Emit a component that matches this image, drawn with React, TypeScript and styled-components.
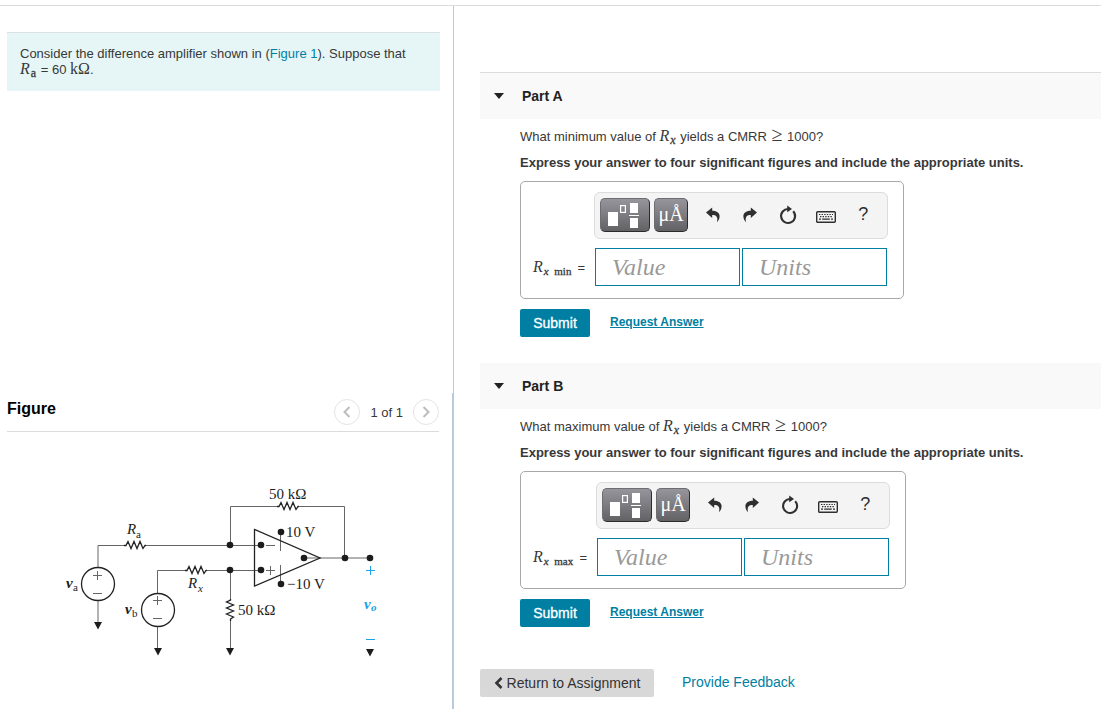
import React, { useId } from 'react';
import styled, { createGlobalStyle } from 'styled-components';

const SANS = '"Liberation Sans", Arial, sans-serif';
const SERIF = '"Liberation Serif", "Times New Roman", serif';
const TEAL = '#007fa3';

const GlobalStyle = createGlobalStyle`
  *, *::before, *::after { box-sizing: border-box; }
  body {
    margin: 0;
    background: #fff;
    color: #383838;
    font-family: ${SANS};
    font-size: 13px;
  }
`;

const Page = styled.div`
  display: flex;
  flex-direction: column;
  min-height: 100vh;
  padding-top: 5px;
`;

const Columns = styled.div`
  flex: 1;
  display: grid;
  grid-template-columns: clamp(320px, 42vw, 454px) minmax(0, 1fr);
  border-top: 1px solid #dcdcdc;
`;

const Side = styled.aside`
  display: flex;
  flex-direction: column;
`;

const ProblemPane = styled.section`
  flex: 1;
  padding: 26px 13px 20px 7px;
  border-right: 1px solid #b9cadd;
`;

const Problem = styled.p`
  margin: 0;
  padding: 13px;
  border-top: 1px solid #dbe0e0;
  background: #e6f6f7;
  line-height: 16px;
`;

const Given = styled.span`
  white-space: nowrap;
`;

const TextLink = styled.a`
  color: ${TEAL};
  text-decoration: none;
`;

const MathText = styled.span<{ $upright?: boolean }>`
  font-family: ${SERIF};
  font-size: 16px;
  font-style: ${(p) => (p.$upright ? 'normal' : 'italic')};
  line-height: 1px;
`;

const MathSub = styled.sub<{ $upright?: boolean }>`
  margin: 0 1px;
  font-family: ${SERIF};
  font-size: 12px;
  font-style: ${(p) => (p.$upright ? 'normal' : 'italic')};
  -webkit-text-stroke: 0.3px currentColor;
  line-height: 1px;
  vertical-align: -3px;
`;

const Relation = styled(MathText)`
  margin: 0 1px;
  font-size: 20px;
`;

const FigurePane = styled.section`
  padding: 0 13px 39px 7px;
  border-right: 2px solid #b9cadd;
`;

const FigureHead = styled.header`
  display: flex;
  align-items: center;
  justify-content: space-between;
  height: 39px;
  border-bottom: 1px solid #dcdcdc;
`;

const FigureTitle = styled.h2`
  margin: 0;
  padding-bottom: 6px;
  color: #000;
  font-size: 16px;
  line-height: 18px;
`;

const Pager = styled.nav`
  display: flex;
  align-items: center;
  gap: 10px;
  font-size: 13px;
`;

const PageCount = styled.span`
  padding-top: 2px;
  line-height: 18px;
`;

const RoundButton = styled.button`
  display: flex;
  align-items: center;
  justify-content: center;
  width: 26px;
  height: 26px;
  padding: 0;
  border: 1px solid #e4e4e4;
  border-radius: 50%;
  background: #fff;
`;

const Circuit = styled.svg`
  display: block;
  width: 350px;
  max-width: 100%;
  margin: 48px 0 0 43px;
  font-family: ${SERIF};
`;

const Main = styled.main`
  padding: 66px 0 12px 26px;
`;

const PartHead = styled.header<{ $first?: boolean }>`
  display: flex;
  align-items: center;
  gap: 18px;
  padding: 0 14px;
  height: ${(p) => (p.$first ? 47 : 46)}px;
  border-top: ${(p) => (p.$first ? '1px solid #dcdcdc' : 'none')};
  background: #f9f9f9;
`;

const PartTitle = styled.h2`
  margin: 0;
  color: #222;
  font-size: 14px;
  line-height: 18px;
`;

const Collapse = styled.button`
  display: flex;
  width: 10px;
  padding: 0;
  border: 0;
  background: none;
`;

const PartBody = styled.div`
  padding: 5px 20px 26px 40px;
`;

const Line = styled.p<{ $strong?: boolean }>`
  margin: 0;
  font-weight: ${(p) => (p.$strong ? 'bold' : 'normal')};
  line-height: 26px;
`;

const AnswerBox = styled.form<{ $labelWidth: number }>`
  display: grid;
  grid-template-columns: ${(p) => p.$labelWidth}px 294px;
  row-gap: 9px;
  width: fit-content;
  margin: 5px 0 10px;
  padding: 10px 15px 12px 12px;
  border: 1px solid #a8a8a8;
  border-radius: 5px;
`;

const Toolbar = styled.div`
  grid-column: 2;
  display: flex;
  align-items: center;
  height: 47px;
  padding: 0 5px 2px;
  border: 1px solid #dcdcdc;
  border-radius: 6px;
  background: #f4f4f4;
`;

const DarkButton = styled.button<{ $width: number }>`
  display: flex;
  align-items: center;
  justify-content: center;
  width: ${(p) => p.$width}px;
  height: 34px;
  padding: 0;
  border: 1px solid #2b2b2b;
  border-top-color: #6d6d72;
  border-left-color: #6d6d72;
  border-radius: 5px;
  background: linear-gradient(#96959c, #626265);
  color: #fff;
  font-family: ${SERIF};
  font-size: 20px;
`;

const DarkGroup = styled.div`
  display: flex;
  gap: 4px;
  margin-right: 6px;
`;

const ToolButton = styled.button`
  display: flex;
  align-items: center;
  justify-content: center;
  width: 38px;
  height: 34px;
  padding: 0;
  border: 0;
  background: none;
  color: #2f2f2f;
  font-family: ${SANS};
  font-size: 18px;
`;

const FieldLabel = styled.label`
  display: flex;
  align-items: center;
  justify-content: space-between;
  padding-right: 9px;
  white-space: nowrap;
`;

const LabelSub = styled(MathSub)`
  font-size: 11px;
`;

const Fields = styled.div`
  display: grid;
  grid-template-columns: 1fr 1fr;
  gap: 2px;
  padding: 0 1px;
`;

const Field = styled.input`
  width: 100%;
  height: 38px;
  padding: 0 16px;
  border: 1px solid ${TEAL};
  border-radius: 0;
  background: #fff;
  color: #222;
  font-family: ${SERIF};
  font-size: 24px;
  font-style: italic;
  &::placeholder { color: #999; opacity: 1; }
`;

const Actions = styled.div`
  display: flex;
  align-items: center;
  gap: 20px;
`;

const Submit = styled.button`
  width: 70px;
  height: 28px;
  padding: 0;
  border: 0;
  border-radius: 2px;
  background: ${TEAL};
  color: #fff;
  font-family: ${SANS};
  font-size: 14px;
  -webkit-text-stroke: 0.3px #fff;
`;

const RequestLink = styled.a`
  padding-bottom: 2px;
  color: ${TEAL};
  font-size: 12px;
  font-weight: bold;
`;

const Footer = styled.footer`
  display: flex;
  align-items: center;
  gap: 28px;
  padding-top: 16px;
  font-size: 14px;
`;

const ReturnButton = styled.button`
  display: flex;
  align-items: center;
  justify-content: center;
  gap: 4px;
  width: 174px;
  height: 28px;
  padding: 0;
  border: 0;
  border-radius: 2px;
  background: #d8d8d8;
  color: #333;
  font-family: ${SANS};
  font-size: 14px;
`;

const FeedbackLink = styled(TextLink)`
  padding-bottom: 2px;
`;

function Chevron({ flip }: { flip?: boolean }) {
  return (
    <svg width="8" height="12" viewBox="0 0 8 12" fill="none" stroke="#bdbdbd" strokeWidth="2">
      <path d={flip ? 'M1.5 1l5 5-5 5' : 'M6.5 1l-5 5 5 5'} />
    </svg>
  );
}

function TemplateIcon() {
  return (
    <svg width="34" height="26" viewBox="0 0 34 26" fill="#fff">
      <rect x="0" y="10" width="10" height="14" />
      <rect x="12.6" y="3.6" width="4.8" height="6.8" fill="none" stroke="#fff" strokeWidth="1.2" />
      <rect x="22" y="1" width="8" height="10" />
      <rect x="21" y="13" width="10" height="1" />
      <rect x="22" y="16" width="8" height="10" />
    </svg>
  );
}

function BentArrow({ flip }: { flip?: boolean }) {
  return (
    <svg width="14" height="16" viewBox="0 0 14 16" fill="#2f2f2f">
      <path
        transform={flip ? 'translate(14 0) scale(-1 1)' : undefined}
        d="M0 5.6L6.2.6V3.7C11.2 3.7 13.8 6.3 13.6 9.6C13.5 12 12.5 13.8 10.9 15.2C11.5 12.8 11.6 10.9 10.5 9.5C9.6 8.3 8.2 8 6.2 8V11Z"
      />
    </svg>
  );
}

function ResetIcon() {
  return (
    <svg width="18" height="20" viewBox="0 0 18 20" fill="none">
      <path d="M14.2 6.2A7 7 0 1 1 9.4 4" stroke="#2f2f2f" strokeWidth="2.1" />
      <path d="M8.2.4L13 4L8.2 7.2Z" fill="#2f2f2f" />
    </svg>
  );
}

function KeyboardIcon() {
  return (
    <svg width="20" height="16" viewBox="0 0 20 16" fill="none" stroke="#2f2f2f">
      <rect x=".7" y="4.7" width="18.6" height="10.6" rx="1" strokeWidth="1.4" />
      <path d="M3 7.5h14M4 9.6h13" strokeWidth="1.2" strokeDasharray="1.4 1.2" />
      <path d="M3 12.2h2M6.2 12.2h7.6M15 12.2h2" strokeWidth="1.3" />
    </svg>
  );
}

const H_RESISTOR = 'l2 0 l2 -4 l3 7 l3 -7 l3 7 l3 -7 l3 7 l2 -3 l1 0';
const DOTS = [
  [230, 545], [230, 570], [261, 545], [261, 570], [281, 532],
  [281, 584], [304, 558], [345, 558], [370, 558],
];
const GROUNDS = [[98, 622], [158, 648], [230, 648], [370, 649]];

function CircuitDiagram() {
  return (
    <Circuit viewBox="50 480 350 190" role="img" aria-label="Difference amplifier circuit">
      <g fill="none" stroke="#666" strokeWidth="1">
        <path d="M98 567V545.5H125M145 545.5H261M98 601V622" />
        <path d="M157.5 593V570.5H186M206 570.5H261M157.5 627V648" />
        <path d="M230.5 545V506.5H278M298 506.5H344.5V558M230.5 570V599M230.5 621V648" />
        <path d="M280.5 532V551M280.5 565V584M304 558H370" />
        <path d="M266 545.5h9M266 570.5h9M270.5 566v9" />
        <path d="M93 575.5h9M97.5 571v9M93 593.5h9M153 600.5h9M157.5 596v9M153 618.5h9" />
      </g>
      <g fill="none" stroke="#222" strokeWidth="1.3">
        <circle cx="98" cy="584" r="16.5" />
        <circle cx="158" cy="610" r="16.5" />
        <path d="M254.5 529.5V586L320 558Z" />
        <path d={`M124 545.5${H_RESISTOR}`} />
        <path d={`M185 570.5${H_RESISTOR}`} />
        <path d={`M277 506.5${H_RESISTOR}`} />
        <path d="M230.5 599v1l-4 2 7 3-7 3 7 3-7 3 7 3-3 2v2" />
      </g>
      <g fill="#1c1c1c">
        {DOTS.map(([x, y]) => (
          <circle key={`${x}-${y}`} cx={x} cy={y} r="3.3" />
        ))}
        {GROUNDS.map(([x, y]) => (
          <path key={`${x}-${y}`} d={`M${x - 4} ${y}h8l-4 7.5z`} />
        ))}
      </g>
      <g fill="#1c1c1c" fontSize="15">
        <text x="269" y="499">50 kΩ</text>
        <text x="238" y="615">50 kΩ</text>
        <text x="286" y="537">10 V</text>
        <text x="287" y="589">−10 V</text>
        <text x="127" y="534" fontStyle="italic">R</text>
        <text x="136" y="538" fontSize="11">a</text>
        <text x="188" y="588" fontStyle="italic">R</text>
        <text x="198" y="592" fontSize="11" fontStyle="italic">x</text>
        <text x="66" y="588" fontStyle="italic" fontWeight="bold">v</text>
        <text x="73" y="591" fontSize="11">a</text>
        <text x="125" y="614" fontStyle="italic" fontWeight="bold">v</text>
        <text x="132" y="617" fontSize="11">b</text>
      </g>
      <g fill="#1ba1e6">
        <path d="M366 570.5h9M370.5 566v9M366 639.5h9" stroke="#1ba1e6" />
        <text x="364" y="609" fontSize="15" fontStyle="italic" fontWeight="bold">v</text>
        <text x="371" y="611" fontSize="11" fontStyle="italic" fontWeight="bold">o</text>
      </g>
    </Circuit>
  );
}

interface PartProps {
  letter: string;
  bound: string;
  short: string;
  labelWidth: number;
  first?: boolean;
}

function Part({ letter, bound, short, labelWidth, first }: PartProps) {
  const id = useId();
  return (
    <section>
      <PartHead $first={first}>
        <Collapse type="button" aria-label={`Collapse Part ${letter}`}>
          <svg width="10" height="6" viewBox="0 0 10 6"><path d="M0 0h10L5 6z" fill="#222" /></svg>
        </Collapse>
        <PartTitle>Part {letter}</PartTitle>
      </PartHead>
      <PartBody>
        <Line>
          What {bound} value of <MathText>R</MathText><MathSub>x</MathSub> yields a CMRR{' '}
          <Relation $upright>≥</Relation> 1000?
        </Line>
        <Line $strong>Express your answer to four significant figures and include the appropriate units.</Line>
        <AnswerBox $labelWidth={labelWidth}>
          <Toolbar>
            <DarkGroup>
              <DarkButton type="button" $width={50} aria-label="Templates"><TemplateIcon /></DarkButton>
              <DarkButton type="button" $width={34}>μÅ</DarkButton>
            </DarkGroup>
            <ToolButton type="button" aria-label="Undo"><BentArrow /></ToolButton>
            <ToolButton type="button" aria-label="Redo"><BentArrow flip /></ToolButton>
            <ToolButton type="button" aria-label="Reset"><ResetIcon /></ToolButton>
            <ToolButton type="button" aria-label="Keyboard"><KeyboardIcon /></ToolButton>
            <ToolButton type="button">?</ToolButton>
          </Toolbar>
          <FieldLabel htmlFor={id}>
            <span>
              <MathText>R</MathText><LabelSub>x</LabelSub> <LabelSub $upright>{short}</LabelSub>
            </span>
            <span>=</span>
          </FieldLabel>
          <Fields>
            <Field id={id} placeholder="Value" />
            <Field placeholder="Units" aria-label="Units" />
          </Fields>
        </AnswerBox>
        <Actions>
          <Submit type="button">Submit</Submit>
          <RequestLink href="#request">Request Answer</RequestLink>
        </Actions>
      </PartBody>
    </section>
  );
}

export default function App() {
  return (
    <>
      <GlobalStyle />
      <Page>
        <Columns>
          <Side>
            <ProblemPane>
              <Problem>
                Consider the difference amplifier shown in (<TextLink href="#figure">Figure 1</TextLink>). Suppose that{' '}
                <Given>
                  <MathText>R</MathText><MathSub $upright>a</MathSub> = 60 <MathText $upright>kΩ</MathText>.
                </Given>
              </Problem>
            </ProblemPane>
            <FigurePane id="figure">
              <FigureHead>
                <FigureTitle>Figure</FigureTitle>
                <Pager aria-label="Figures">
                  <RoundButton type="button" aria-label="Previous figure"><Chevron /></RoundButton>
                  <PageCount>1 of 1</PageCount>
                  <RoundButton type="button" aria-label="Next figure"><Chevron flip /></RoundButton>
                </Pager>
              </FigureHead>
              <CircuitDiagram />
            </FigurePane>
          </Side>
          <Main>
            <Part letter="A" bound="minimum" short="min" labelWidth={61} first />
            <Part letter="B" bound="maximum" short="max" labelWidth={63} />
            <Footer>
              <ReturnButton type="button">
                <svg width="9" height="12" viewBox="0 0 9 12" fill="none" stroke="#333" strokeWidth="2.6">
                  <path d="M7.5 1l-5 5 5 5" />
                </svg>
                Return to Assignment
              </ReturnButton>
              <FeedbackLink href="#feedback">Provide Feedback</FeedbackLink>
            </Footer>
          </Main>
        </Columns>
      </Page>
    </>
  );
}
